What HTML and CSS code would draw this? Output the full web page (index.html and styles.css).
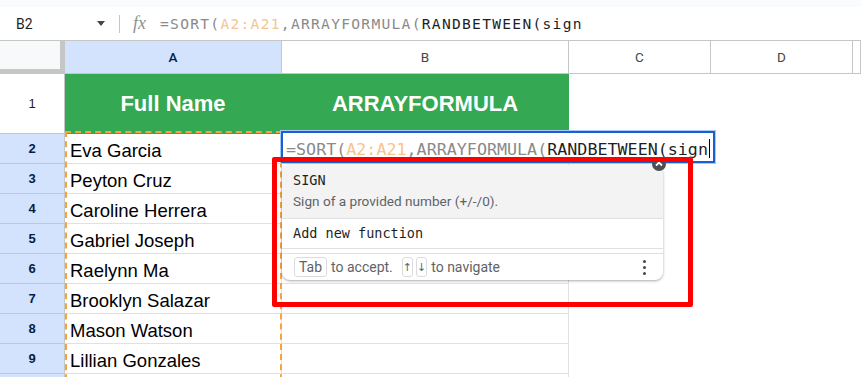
FILE: index.html
```html
<!DOCTYPE html>
<html lang="en">
<head>
  <meta charset="UTF-8" />
  <title>Sheets - SORT with RANDBETWEEN</title>
  <link rel="stylesheet" href="styles.css">
</head>
<body>
  <div class="topband"></div>
  <div class="formula-bar">
    <div class="name-box"><span>B2</span><span class="caret"></span></div>
    <span class="sep"></span>
    <span class="fx">fx</span>
    <div class="formula"><span class="op">=SORT(</span><span class="rng">A2:A21</span><span class="op">,ARRAYFORMULA(</span><span class="fn">RANDBETWEEN(sign</span></div>
  </div>

  <div class="sheet">
    <div class="row head">
      <div class="rh corner"></div>
      <div class="hc col-a sel">A</div>
      <div class="hc col-b">B</div>
      <div class="hc col-c">C</div>
      <div class="hc col-d">D</div>
      <div class="hc col-e"></div>
    </div>

    <div class="row r1">
      <div class="rh plain">1</div>
      <div class="cell col-a green">Full Name</div>
      <div class="cell col-b green">ARRAYFORMULA</div>
      <div class="cell col-c blank"></div>
      <div class="cell col-d blank"></div>
    </div>

    <div class="row"><div class="rh">2</div><div class="cell col-a">Eva Garcia</div><div class="cell col-b"></div></div>
    <div class="row"><div class="rh">3</div><div class="cell col-a">Peyton Cruz</div><div class="cell col-b"></div></div>
    <div class="row"><div class="rh">4</div><div class="cell col-a">Caroline Herrera</div><div class="cell col-b"></div></div>
    <div class="row"><div class="rh">5</div><div class="cell col-a">Gabriel Joseph</div><div class="cell col-b"></div></div>
    <div class="row"><div class="rh">6</div><div class="cell col-a">Raelynn Ma</div><div class="cell col-b"></div></div>
    <div class="row"><div class="rh">7</div><div class="cell col-a">Brooklyn Salazar</div><div class="cell col-b"></div></div>
    <div class="row"><div class="rh">8</div><div class="cell col-a">Mason Watson</div><div class="cell col-b"></div></div>
    <div class="row"><div class="rh">9</div><div class="cell col-a">Lillian Gonzales</div><div class="cell col-b"></div></div>
    <div class="row"><div class="rh"></div><div class="cell col-a"></div><div class="cell col-b"></div></div>

    <!-- overlays -->
    <div class="range"></div>

    <div class="editor">
      <span class="op">=SORT(</span><span class="rng">A2:A21</span><span class="op">,ARRAYFORMULA(</span><span class="fn">RANDBETWEEN(sign</span><span class="cursor"></span>
    </div>

    <div class="popup">
      <div class="sug">
        <div class="sug-name">SIGN</div>
        <div class="sug-desc">Sign of a provided number (+/-/0).</div>
      </div>
      <div class="add">Add new function</div>
      <div class="gap"></div>
      <div class="foot">
        <span class="key">Tab</span>
        <span class="hint">to accept.</span>
        <span class="key arrow">↑</span>
        <span class="key arrow">↓</span>
        <span class="hint">to navigate</span>
        <span class="kebab"><i></i><i></i><i></i></span>
      </div>
    </div>

    <div class="close">
      <svg width="14" height="14" viewBox="0 0 14 14"><path d="M4 8.5 L7 5.5 L10 8.5" fill="none" stroke="#fff" stroke-width="1.8"/></svg>
    </div>

    <div class="redbox"></div>
  </div>
</body>
</html>
```

FILE: styles.css
```css
body {
  margin: 0;
  width: 861px;
  height: 377px;
  overflow: hidden;
  background: #fff;
  font-family: Roboto, Arial, sans-serif;
  color: #1f1f1f;
}

.topband {
  height: 7px;
  background: #f9fbfd;
}

/* formula bar */
.formula-bar {
  display: flex;
  align-items: center;
  height: 33px;
  border-bottom: 1px solid #c4c7c5;
}
.name-box {
  display: flex;
  align-items: center;
  justify-content: space-between;
  box-sizing: border-box;
  width: 105px;
  padding-left: 16px;
  font-size: 14px;
}
.caret {
  width: 0;
  height: 0;
  border-left: 4px solid transparent;
  border-right: 4px solid transparent;
  border-top: 5px solid #444746;
}
.sep {
  width: 1px;
  height: 18px;
  margin-left: 14px;
  background: #c4c7c5;
}
.fx {
  display: inline-block;
  width: 16px;
  margin-left: 13px;
  font-family: "Liberation Serif", serif;
  font-style: italic;
  font-size: 18px;
  color: #8e918f;
}
.formula {
  margin-left: 11px;
  font-family: "DejaVu Sans Mono", monospace;
  font-size: 14.6px;
  letter-spacing: 1.28px;
  white-space: nowrap;
}
.op { color: #8a8a8a; }
.rng { color: #f7c48d; }
.fn { color: #1f1f1f; }

/* grid */
.sheet {
  position: relative;
}
.row {
  display: flex;
  height: 30px;
}
.row > div {
  box-sizing: border-box;
  flex: none;
}
.rh {
  width: 65px;
  border-right: 1px solid #c4c7c5;
  border-bottom: 1px solid #c4c7c5;
  background: #d3e3fd;
  display: flex;
  align-items: center;
  justify-content: center;
  font-family: Arial, "Liberation Sans", sans-serif;
  font-weight: bold;
  font-size: 13px;
  color: #041e49;
}
.rh.plain {
  background: #fff;
  font-weight: normal;
  color: #1f1f1f;
}
.col-a { width: 217px; }
.col-b { width: 287px; }
.col-c { width: 142px; }
.col-d { width: 142px; }
.col-e { flex: 1 !important; }

.head {
  height: 33px;
}
.corner {
  background: #f8f9fa;
  border-right: 5px solid #c4c7c5;
  border-bottom: 5px solid #c4c7c5;
}
.hc {
  border-right: 1px solid #c4c7c5;
  border-bottom: 1px solid #c4c7c5;
  display: flex;
  align-items: center;
  justify-content: center;
  font-size: 13.5px;
  color: #444746;
}
.hc.sel {
  background: #d3e3fd;
  color: #041e49;
  font-weight: 500;
}

.r1 {
  height: 60px;
}
.cell {
  border-right: 1px solid #e1e1e1;
  border-bottom: 1px solid #e1e1e1;
  padding: 4px 0 0 5px;
  line-height: 25px;
  font-family: Arial, "Liberation Sans", sans-serif;
  font-size: 18.5px;
  color: #000;
  white-space: nowrap;
}
.cell.green {
  display: flex;
  align-items: center;
  justify-content: center;
  padding: 0;
  background: #34a853;
  border-color: #34a853;
  color: #fff;
  font-weight: bold;
  font-size: 22px;
}
.cell.blank {
  border: none;
}

/* overlays */
.range {
  position: absolute;
  left: 65px;
  top: 90px;
  width: 217px;
  height: 300px;
  box-sizing: border-box;
  border: 2px dashed #f4a33d;
}
.editor {
  position: absolute;
  left: 281px;
  top: 90px;
  width: 434px;
  height: 32px;
  box-sizing: border-box;
  border: 2px solid #1a5fd0;
  box-shadow: 0 0 0 1px #a8c7fa;
  background: #fff;
  display: flex;
  align-items: center;
  padding: 3px 0 0 3px;
  font-family: "DejaVu Sans Mono", monospace;
  font-size: 16.7px;
  white-space: nowrap;
}
.cursor {
  display: inline-block;
  width: 1px;
  height: 19px;
  margin-left: 1px;
  background: #000;
}

.popup {
  position: absolute;
  left: 282px;
  top: 124px;
  width: 381px;
  height: 115px;
  background: #fff;
  border-radius: 8px;
  box-shadow: 0 1px 3px rgba(0, 0, 0, 0.25), 0 1px 2px rgba(0, 0, 0, 0.1);
}
.sug {
  height: 54px;
  box-sizing: border-box;
  padding: 6px 11px 0;
  background: #f3f3f3;
  border-radius: 8px 8px 0 0;
  border-bottom: 1px solid #e0e0e0;
}
.sug-name {
  line-height: 18px;
  font-family: "DejaVu Sans Mono", monospace;
  font-size: 13.5px;
  color: #1f1f1f;
}
.sug-desc {
  margin-top: 3px;
  line-height: 18px;
  font-size: 13.6px;
  color: #5f6368;
}
.add {
  height: 30px;
  box-sizing: border-box;
  padding-left: 11px;
  line-height: 29px;
  border-bottom: 1px solid #e0e0e0;
  font-family: "DejaVu Sans Mono", monospace;
  font-size: 13.5px;
  color: #1f1f1f;
}
.gap {
  height: 5px;
  box-sizing: border-box;
  border-bottom: 1px solid #e0e0e0;
}
.foot {
  display: flex;
  align-items: center;
  height: 26px;
  padding: 0 17px 0 12px;
  font-size: 14px;
  color: #5f6368;
}
.key {
  box-sizing: border-box;
  height: 20px;
  padding: 0 4px;
  line-height: 18px;
  border: 1px solid #dadce0;
  border-radius: 3px;
}
.key.arrow {
  padding: 0;
  text-align: center;
  font-family: "DejaVu Sans", sans-serif;
  font-size: 11px;
  line-height: 19px;
  margin-left: 3px;
}
.hint {
  margin: 0 6px 0 4px;
}
.kebab {
  margin-left: auto;
  display: flex;
  flex-direction: column;
  gap: 3px;
}
.kebab i {
  width: 3px;
  height: 3px;
  border-radius: 50%;
  background: #444746;
}

.close {
  position: absolute;
  left: 652px;
  top: 116px;
  width: 14px;
  height: 14px;
  border-radius: 50%;
  background: #4d4f52;
}
.close svg {
  display: block;
}

.redbox {
  position: absolute;
  left: 272px;
  top: 116px;
  width: 421px;
  height: 150px;
  box-sizing: border-box;
  border: 5px solid #ff0000;
  border-radius: 2px;
}
```
